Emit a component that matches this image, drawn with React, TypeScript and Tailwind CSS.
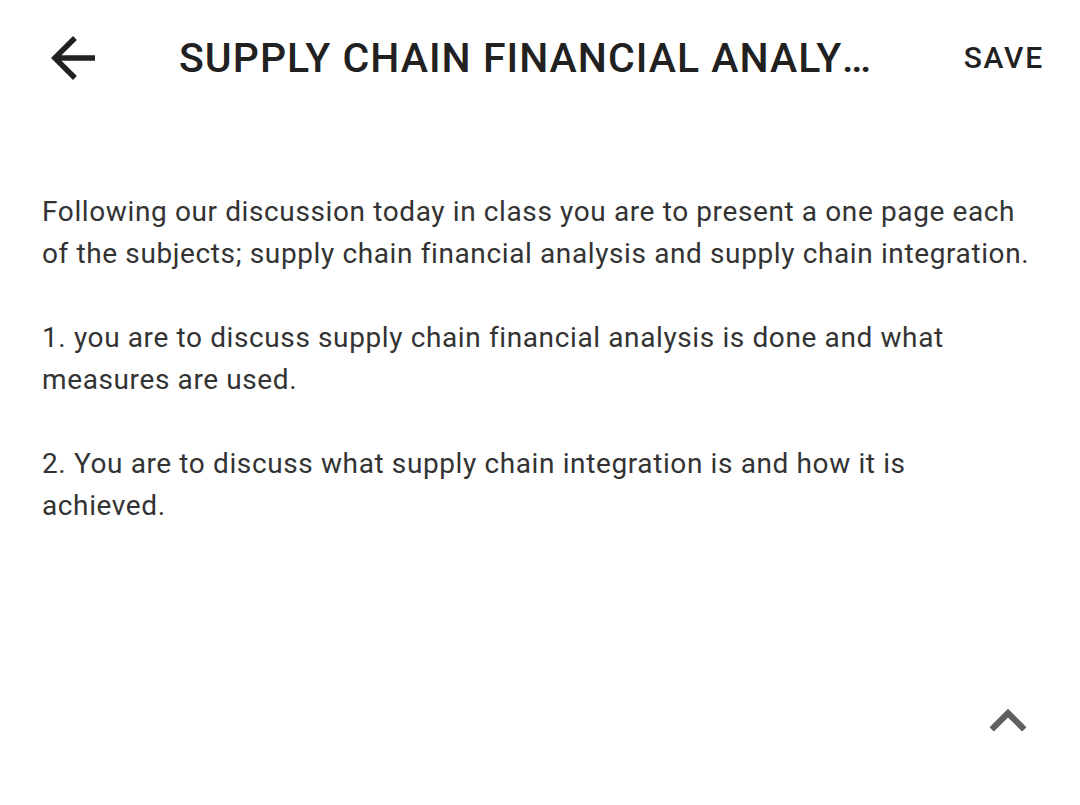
import React from "react";

const ArrowBack = () => (
  <svg viewBox="0 0 24 24" className="w-[66px] h-[66px]" fill="#212121">
    <path d="M20 11H7.83l5.59-5.59L12 4l-8 8 8 8 1.41-1.41L7.83 13H20v-2z" />
  </svg>
);

const ExpandLess = () => (
  <svg viewBox="0 0 24 24" className="w-[74px] h-[74px]" fill="#5f5f5f">
    <path d="M12 8l-6 6 1.41 1.41L12 10.83l4.59 4.58L18 14z" />
  </svg>
);

export default function App() {
  return (
    <div
      className="w-[1080px] h-[805px] bg-white flex flex-col overflow-hidden"
      style={{ fontFamily: "Roboto, 'Noto Sans', sans-serif" }}
    >
      {/* Toolbar */}
      <div className="flex items-center h-[118px] pl-[40px] pr-[36px]">
        <button className="shrink-0 -mt-[2px]">
          <ArrowBack />
        </button>
        <h1 className="flex-1 min-w-0 ml-[73px] mr-[86px] text-[41px] font-medium leading-[48px] tracking-[0.025em] text-[#212121] truncate -mt-[2px]">
          SUPPLY CHAIN FINANCIAL ANALYSIS
        </h1>
        <button className="shrink-0 text-[30px] font-medium tracking-[0.06em] text-[#212121] -mt-[4px]">
          SAVE
        </button>
      </div>

      {/* Body */}
      <div className="flex-1 px-[42px] pt-[73px] text-[28px] leading-[42px] tracking-[0.022em] text-[#333333]">
        <p>
          Following our discussion today in class you are to present a one page each
          <br />
          of the subjects; supply chain financial analysis and supply chain integration.
        </p>
        <p className="mt-[42px]">
          1. you are to discuss supply chain financial analysis is done and what
          <br />
          measures are used.
        </p>
        <p className="mt-[42px]">
          2. You are to discuss what supply chain integration is and how it is
          <br />
          achieved.
        </p>
      </div>

      {/* Scroll to top */}
      <div className="flex justify-end pr-[35px] pb-[47px]">
        <ExpandLess />
      </div>
    </div>
  );
}
